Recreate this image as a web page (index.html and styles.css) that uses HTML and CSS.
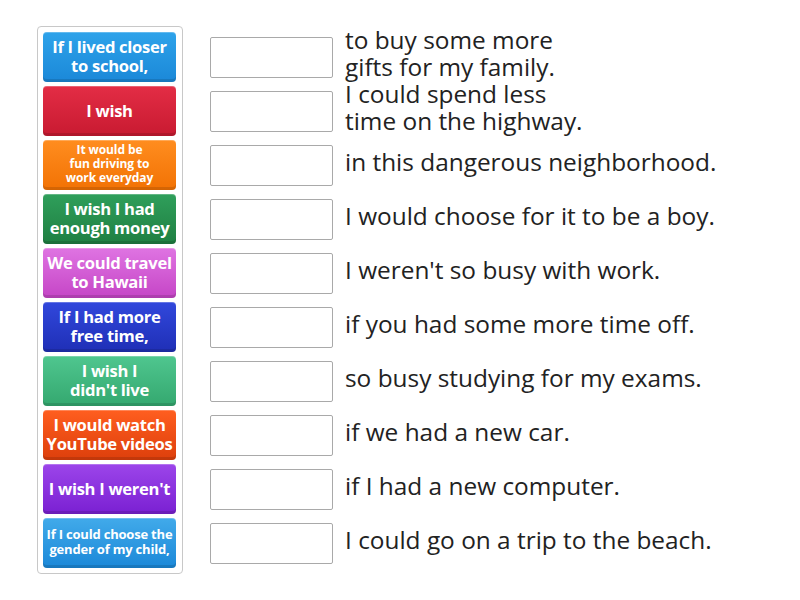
FILE: index.html
```html
<!doctype html>
<html lang="en">
  <head>
    <meta charset="UTF-8" />
    <title>Match up</title>
    <link rel="stylesheet" href="styles.css">
  </head>
  <body>
    <div class="game">
      <div class="tiles">
        <div class="tile blue"><span>If I lived closer<br>to school,</span></div>
        <div class="tile red"><span>I wish</span></div>
        <div class="tile orange small"><span>It would be<br>fun driving to<br>work everyday</span></div>
        <div class="tile green"><span>I wish I had<br>enough money</span></div>
        <div class="tile pink"><span>We could travel<br>to Hawaii</span></div>
        <div class="tile navy"><span>If I had more<br>free time,</span></div>
        <div class="tile mint"><span>I wish I<br>didn't live</span></div>
        <div class="tile flame"><span>I would watch<br>YouTube videos</span></div>
        <div class="tile purple"><span>I wish I weren't</span></div>
        <div class="tile sky mid"><span>If I could choose the<br>gender of my child,</span></div>
      </div>

      <div class="rows">
        <div class="row"><div class="slot"></div><div class="text">to buy some more<br>gifts for my family.</div></div>
        <div class="row"><div class="slot"></div><div class="text">I could spend less<br>time on the highway.</div></div>
        <div class="row"><div class="slot"></div><div class="text">in this dangerous neighborhood.</div></div>
        <div class="row"><div class="slot"></div><div class="text">I would choose for it to be a boy.</div></div>
        <div class="row"><div class="slot"></div><div class="text">I weren't so busy with work.</div></div>
        <div class="row"><div class="slot"></div><div class="text">if you had some more time off.</div></div>
        <div class="row"><div class="slot"></div><div class="text">so busy studying for my exams.</div></div>
        <div class="row"><div class="slot"></div><div class="text">if we had a new car.</div></div>
        <div class="row"><div class="slot"></div><div class="text">if I had a new computer.</div></div>
        <div class="row"><div class="slot"></div><div class="text">I could go on a trip to the beach.</div></div>
      </div>
    </div>
  </body>
</html>
```

FILE: styles.css
```css
body {
  margin: 0;
  padding: 26px 0 0 37px;
  background: #fff;
  font-family: "Open Sans", Arial, sans-serif;
}
.game {
  display: flex;
  align-items: flex-start;
}
.tiles {
  width: 133px;
  padding: 5px 6px 5px 5px;
  border: 1px solid #c8c8c8;
  border-radius: 4px;
  display: flex;
  flex-direction: column;
  gap: 4px;
}
.tile {
  height: 50px;
  border-radius: 4px;
  display: flex;
  align-items: center;
  justify-content: center;
  text-align: center;
  color: #fff;
  font-weight: 700;
  font-size: 16.6px;
  line-height: 19px;
  letter-spacing: -0.3px;
  white-space: nowrap;
  box-shadow: inset 0 1px 0 rgba(255, 255, 255, 0.25), inset 0 -3px 0 rgba(0, 0, 0, 0.12);
}
.tile span {
  margin-top: -2px;
}
.tile.small {
  font-size: 12px;
  line-height: 14px;
  letter-spacing: -0.1px;
}
.tile.mid {
  font-size: 13px;
  line-height: 15px;
  letter-spacing: -0.2px;
}
.blue { background: linear-gradient(#2ea3ea, #1b88d8); }
.red { background: linear-gradient(#e32d45, #c81a31); }
.orange { background: linear-gradient(#ff8d1f, #f27204); }
.green { background: linear-gradient(#2f9f5b, #1f7f42); }
.pink { background: linear-gradient(#df74e2, #c545c6); }
.navy { background: linear-gradient(#3148dc, #1f2fb6); }
.mint { background: linear-gradient(#4fc68f, #34a86f); }
.flame { background: linear-gradient(#ff5e1f, #dd3f0c); }
.purple { background: linear-gradient(#9c45ea, #7a20d2); }
.sky { background: linear-gradient(#41aaea, #1b88d8); }
.rows {
  margin-top: 6px;
  margin-left: 27px;
  display: flex;
  flex-direction: column;
  gap: 4px;
}
.row {
  height: 50px;
  display: flex;
  align-items: center;
}
.slot {
  width: 121px;
  height: 39px;
  border: 1px solid #a9a9a9;
  border-radius: 2px;
  flex: none;
}
.text {
  margin-left: 12px;
  margin-top: -8px;
  font-size: 24.4px;
  line-height: 27px;
  color: #222;
  white-space: nowrap;
}
```
